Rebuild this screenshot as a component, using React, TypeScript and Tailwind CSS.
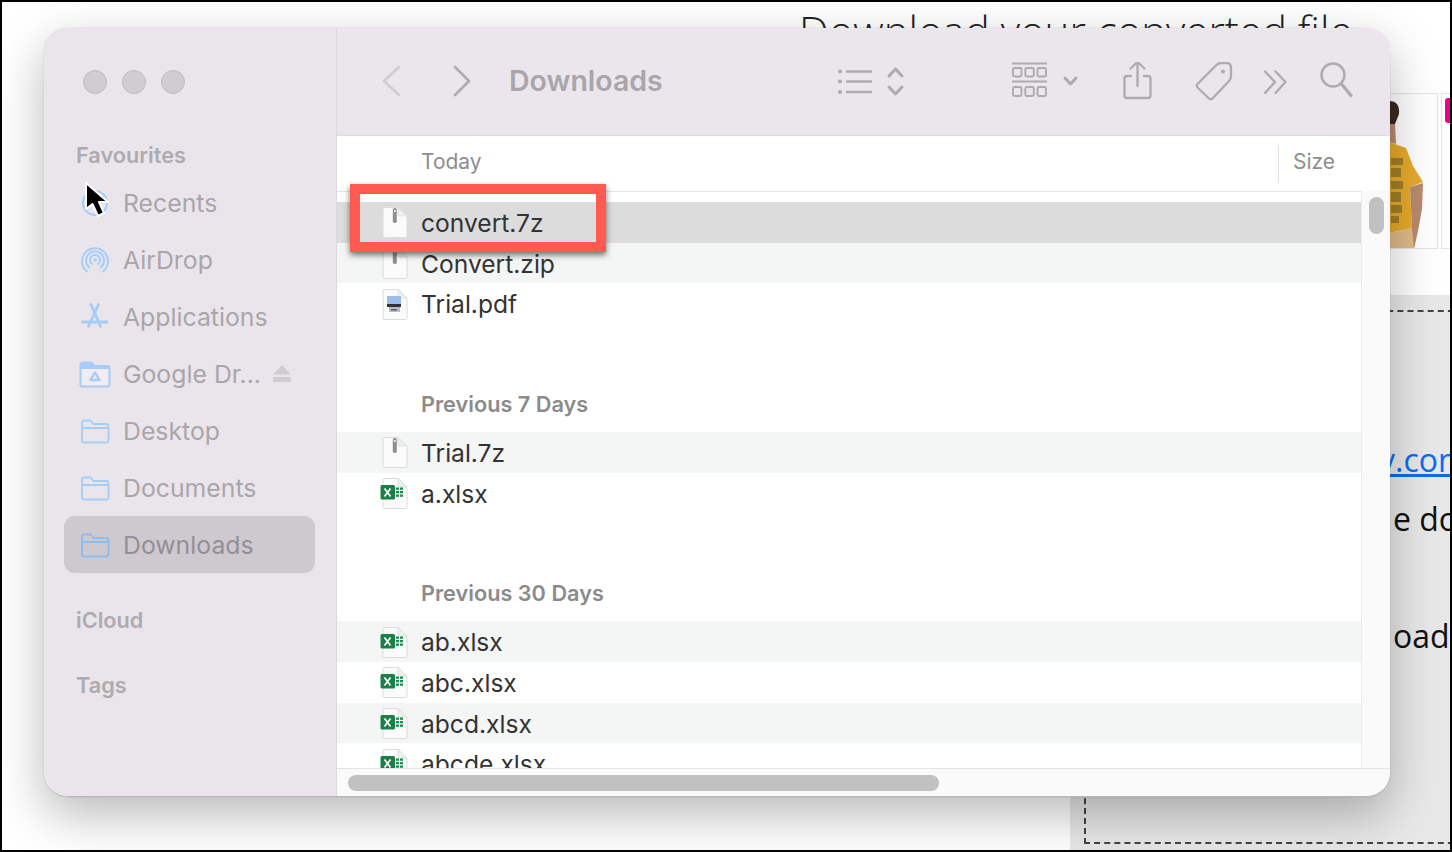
import React from "react";

const FONT = "font-['Inter','Liberation_Sans',sans-serif]";

function Svg({ w, h = 40, children }: { w: number; h?: number; children: React.ReactNode }) {
  return (
    <svg width={w} height={h} viewBox={`0 0 ${w} ${h}`} fill="none" className="shrink-0 block">
      {children}
    </svg>
  );
}

const BLUE = "#a6cdf8";

function FolderIcon({ color = BLUE }: { color?: string }) {
  return (
    <Svg w={32} h={28}>
      <path d="M3 7.500V5.500a2 2 0 0 1 2-2h6.500l3 3.500H27a2.500 2.500 0 0 1 2.500 2.500V23a2.500 2.500 0 0 1-2.500 2.500H5.500A2.500 2.500 0 0 1 3 23Z M3 11H29.500" stroke={color} strokeWidth="1.900" strokeLinejoin="round" />
    </Svg>
  );
}

function RecentsIcon() {
  return (
    <Svg w={32} h={28}>
      <circle cx="16" cy="14" r="12" stroke={BLUE} strokeWidth="2" />
      <path d="M16 7v7l5 3" stroke={BLUE} strokeWidth="2" />
    </Svg>
  );
}

function AirDropIcon() {
  return (
    <Svg w={32} h={30}>
      <g stroke={BLUE} strokeWidth="1.900" strokeLinecap="round">
        <path d="M8 26.500A13 13 0 1 1 24 26.500" />
        <path d="M10.500 22.500A9 9 0 1 1 21.500 22.500" />
        <path d="M12.800 18.800A5 5 0 1 1 19.200 18.800" />
      </g>
      <circle cx="16" cy="15" r="1.800" fill={BLUE} />
    </Svg>
  );
}

function AppsIcon() {
  return (
    <Svg w={32} h={30}>
      <g stroke={BLUE} strokeWidth="2.800" strokeLinecap="round">
        <path d="M12 2.500 L21.500 24.500" />
        <path d="M19.500 2.500 L9.500 24.500" />
        <path d="M3.500 20 H28" />
      </g>
    </Svg>
  );
}

function DriveFolderIcon() {
  return (
    <Svg w={32} h={28}>
      <path d="M1.500 5a2.500 2.500 0 0 1 2.500-2.500h8.500l3 3.500H28.500a2 2 0 0 1 2 2V24.500a2 2 0 0 1-2 2H3.500a2 2 0 0 1-2-2Z" fill="#f0ecf1" stroke={BLUE} strokeWidth="2" strokeLinejoin="round" />
      <path d="M1.500 5a2.500 2.500 0 0 1 2.500-2.500h8.500l3 3.500H30V9H1.500Z" fill={BLUE} />
      <path d="M16 12.500 L20.500 20H11.500Z" stroke={BLUE} strokeWidth="2.400" strokeLinejoin="round" />
    </Svg>
  );
}

function Eject() {
  return (
    <Svg w={20} h={20}>
      <path d="M10 1 L19 10.500 H1 Z" fill="#cfcbd0" />
      <rect x="1" y="13" width="18" height="5" rx="1" fill="#cfcbd0" />
    </Svg>
  );
}

function SideItem({ icon, label, selected, extra }: { icon: React.ReactNode; label: string; selected?: boolean; extra?: React.ReactNode }) {
  return (
    <div className={`h-[57px] w-[251px] ml-[20px] rounded-[11px] flex items-center pl-[15px] pt-[1px] ${selected ? "bg-[#cec9cf]" : ""}`}>
      <div className="w-[32px] flex justify-center shrink-0">{icon}</div>
      <span className={`ml-[12px] text-[24.800px] leading-none whitespace-nowrap ${selected ? "text-[#939095]" : "text-[#a9a6aa]"}`}>{label}</span>
      {extra}
    </div>
  );
}

function SectionLabel({ children, className = "" }: { children: React.ReactNode; className?: string }) {
  return <div className={`ml-[32px] text-[21.700px] leading-none font-semibold text-[#aeabaf] ${className}`}>{children}</div>;
}

function DocBase({ children }: { children?: React.ReactNode }) {
  return (
    <svg width="32" height="34" viewBox="0 0 32 34" fill="none" className="block shrink-0">
      <path d="M6.500 2.500H20L29 11V31a1.500 1.500 0 0 1-1.500 1.500H6.500A1.500 1.500 0 0 1 5 31V4a1.500 1.500 0 0 1 1.500-1.500Z" fill="#fbfbfb" stroke="#dcdcdc" strokeWidth="1" />
      <path d="M20 2.500V9.500a1.500 1.500 0 0 0 1.500 1.500H29Z" fill="#efefef" stroke="#dcdcdc" strokeWidth="0.800" />
      {children}
    </svg>
  );
}

function ZipIcon() {
  return (
    <DocBase>
      <rect x="14.800" y="3" width="4" height="15" rx="1.800" fill="#8f8f8f" />
      <rect x="15.800" y="5" width="2" height="2" fill="#e4e4e4" />
    </DocBase>
  );
}

function XlsIcon() {
  return (
    <DocBase>
      <rect x="2.500" y="9" width="14.500" height="14.500" rx="1.500" fill="#1a8048" />
      <path d="M6.500 12.500 L12.500 20.500 M12.500 12.500 L6.500 20.500" stroke="#fff" strokeWidth="1.700" />
      <g fill="#1f8a50">
        <rect x="18" y="11.500" width="3" height="2.300" /><rect x="22" y="11.500" width="3" height="2.300" />
        <rect x="18" y="15" width="3" height="2.300" /><rect x="22" y="15" width="3" height="2.300" />
        <rect x="18" y="18.500" width="3" height="2.300" /><rect x="22" y="18.500" width="3" height="2.300" />
      </g>
    </DocBase>
  );
}

function PdfIcon() {
  return (
    <DocBase>
      <rect x="9" y="9" width="14" height="8" fill="#9dbbe8" />
      <rect x="9" y="17" width="14" height="3" fill="#30333c" />
      <rect x="11" y="20" width="11" height="5" fill="#b9bcc4" />
      <rect x="13" y="22" width="6" height="1.500" fill="#5a5d66" />
    </DocBase>
  );
}

function Row({ name, icon, bg = "" }: { name: string; icon: React.ReactNode; bg?: string }) {
  return (
    <div className={`h-[40.670px] shrink-0 flex items-center pl-[41px] ${bg}`}>
      <div className="w-[43px] shrink-0">{icon}</div>
      <span className="pt-[2px] text-[24.600px] leading-none text-[#333] whitespace-nowrap">{name}</span>
    </div>
  );
}

function GroupHeader({ children }: { children: React.ReactNode }) {
  return (
    <div className="h-[108px] shrink-0 flex items-end pl-[84px] pb-[13px]">
      <span className="h-[28px] flex items-center text-[21.700px] leading-none font-semibold text-[#8b8b8b] whitespace-nowrap">{children}</span>
    </div>
  );
}

const TOOL = "#aeabb0";

function Toolbar() {
  return (
    <div className="h-[108px] shrink-0 flex items-center bg-[#eae6ec] border-b border-[#dedade]">
      <div className="ml-[43px]">
        <Svg w={24}>
          <path d="M19 5 L4 19 L19 33" stroke="#d0ccd1" strokeWidth="2.600" strokeLinecap="round" strokeLinejoin="round" />
        </Svg>
      </div>
      <div className="ml-[46px]">
        <Svg w={24}>
          <path d="M5 5 L19 19 L5 33" stroke={TOOL} strokeWidth="2.600" strokeLinecap="round" strokeLinejoin="round" />
        </Svg>
      </div>
      <div className="ml-[35px] mb-[1px] w-[153px] text-[28.500px] leading-none font-semibold text-[#a9a6ab] whitespace-nowrap">Downloads</div>
      <div className="ml-[174px]">
        <Svg w={70}>
          <g fill={TOOL}>
            <circle cx="4" cy="9.500" r="2" /><circle cx="4" cy="19.500" r="2" /><circle cx="4" cy="30" r="2" />
          </g>
          <path d="M11 9.500H35 M11 19.500H35 M11 30H35" stroke={TOOL} strokeWidth="2.400" strokeLinecap="round" />
          <path d="M53 14 L59.500 7 L66 14 M53 25 L59.500 32 L66 25" stroke={TOOL} strokeWidth="3" strokeLinecap="round" strokeLinejoin="round" />
        </Svg>
      </div>
      <div className="ml-[104px]">
        <Svg w={72}>
          <path d="M2 1.500H37 M2 19.500H37" stroke={TOOL} strokeWidth="2.200" />
          <g stroke={TOOL} strokeWidth="1.900" fill="none">
            <rect x="3" y="6" width="8.500" height="8.500" rx="1.500" /><rect x="15.300" y="6" width="8.500" height="8.500" rx="1.500" /><rect x="27.500" y="6" width="8.500" height="8.500" rx="1.500" />
            <rect x="3" y="25" width="8.500" height="9" rx="1.500" /><rect x="15.300" y="25" width="8.500" height="9" rx="1.500" /><rect x="27.500" y="25" width="8.500" height="9" rx="1.500" />
          </g>
          <path d="M55 16 L60.500 22 L66 16" stroke={TOOL} strokeWidth="3" strokeLinecap="round" strokeLinejoin="round" />
        </Svg>
      </div>
      <div className="ml-[38px]">
        <Svg w={34}>
          <path d="M11 14H7a2.500 2.500 0 0 0-2.500 2.500V33.500A2.500 2.500 0 0 0 7 36H28a2.500 2.500 0 0 0 2.500-2.500V16.500A2.500 2.500 0 0 0 28 14H24" stroke={TOOL} strokeWidth="2.300" strokeLinecap="round" />
          <path d="M17.500 24V0 M10.500 6.500 L17.500 0 L24.500 6.500" stroke={TOOL} strokeWidth="2.300" strokeLinecap="round" strokeLinejoin="round" />
        </Svg>
      </div>
      <div className="ml-[40px]">
        <Svg w={40}>
          <path d="M3.500 22 L23 2.500 Q25 1 28 1 H33 Q37 1 37 6 V14 Q37 17 35 19 L18.500 36.500 Q16.500 38 14.500 36 L3.500 25.500 Q2 23.500 3.500 22 Z" stroke={TOOL} strokeWidth="2.300" strokeLinejoin="round" />
          <circle cx="29" cy="9.500" r="2" fill={TOOL} />
        </Svg>
      </div>
      <div className="ml-[28px]">
        <Svg w={28}>
          <path d="M3 9.500 L13 20 L3 31 M13.500 9.500 L23.500 20 L13.500 31" stroke={TOOL} strokeWidth="2.300" strokeLinecap="round" strokeLinejoin="round" />
        </Svg>
      </div>
      <div className="ml-[28px]">
        <Svg w={36}>
          <circle cx="15" cy="13" r="11.500" stroke={TOOL} strokeWidth="2.500" />
          <path d="M23.500 22 L33 33.500" stroke={TOOL} strokeWidth="3.400" strokeLinecap="round" />
        </Svg>
      </div>
    </div>
  );
}

function FileList() {
  return (
    <div className="h-[577px] w-[1024px] bg-white border-t border-[#e3e3e3] flex flex-col overflow-hidden pt-[10px]">
      <Row name="convert.7z" icon={<ZipIcon />} bg="bg-[#dcdcdc]" />
      <Row name="Convert.zip" icon={<ZipIcon />} bg="bg-[#f4f5f5]" />
      <Row name="Trial.pdf" icon={<PdfIcon />} />
      <GroupHeader>Previous 7 Days</GroupHeader>
      <Row name="Trial.7z" icon={<ZipIcon />} bg="bg-[#f4f5f5]" />
      <Row name="a.xlsx" icon={<XlsIcon />} />
      <GroupHeader>Previous 30 Days</GroupHeader>
      <Row name="ab.xlsx" icon={<XlsIcon />} bg="bg-[#f4f5f5]" />
      <Row name="abc.xlsx" icon={<XlsIcon />} />
      <Row name="abcd.xlsx" icon={<XlsIcon />} bg="bg-[#f4f5f5]" />
      <Row name="abcde.xlsx" icon={<XlsIcon />} />
    </div>
  );
}

function FinderWindow() {
  return (
    <div className={`absolute left-[44px] top-[28px] w-[1346px] h-[769px] rounded-[24px] overflow-hidden flex ${FONT} border-b border-[#b9b6ba]`}>
      <aside className="w-[293px] shrink-0 bg-[#e9e5eb] border-r border-[#dcd8dd] flex flex-col">
        <div className="flex gap-[15px] ml-[39px] mt-[41.500px]">
          <div className="size-[24px] rounded-full bg-[#d0ccd1] border border-[#bfbbc0]" />
          <div className="size-[24px] rounded-full bg-[#d0ccd1] border border-[#bfbbc0]" />
          <div className="size-[24px] rounded-full bg-[#d0ccd1] border border-[#bfbbc0]" />
        </div>
        <SectionLabel className="mt-[51px]">Favourites</SectionLabel>
        <div className="mt-[8px] flex flex-col">
          <SideItem icon={<RecentsIcon />} label="Recents" />
          <SideItem icon={<AirDropIcon />} label="AirDrop" />
          <SideItem icon={<AppsIcon />} label="Applications" />
          <SideItem
            icon={<DriveFolderIcon />}
            label="Google Dr..."
            extra={<div className="ml-[11px]"><Eject /></div>}
          />
          <SideItem icon={<FolderIcon />} label="Desktop" />
          <SideItem icon={<FolderIcon />} label="Documents" />
          <SideItem icon={<FolderIcon color="#8fbcee" />} label="Downloads" selected />
        </div>
        <SectionLabel className="mt-[37px]">iCloud</SectionLabel>
        <SectionLabel className="mt-[43px]">Tags</SectionLabel>
      </aside>
      <main className="flex-1 flex flex-col bg-[#fafafa] min-w-0">
        <Toolbar />
        <div className="h-[55px] shrink-0 bg-white flex items-center">
          <span className="ml-[84px] mb-[4px] text-[21px] leading-none text-[#8e8e8e]">Today</span>
          <div className="ml-auto w-[112px] h-[38px] border-l border-[#e2e2e2] flex items-center pl-[14px] pb-[4px]">
            <span className="text-[21px] leading-none text-[#8e8e8e]">Size</span>
          </div>
        </div>
        <div className="flex">
          <FileList />
          <div className="w-[29px] border-l border-[#ececec] pt-[6px] flex justify-center">
            <div className="w-[15px] h-[37px] rounded-full bg-[#c1c1c1]" />
          </div>
        </div>
        <div className="flex-1 border-t border-[#e3e3e3] pl-[11px] pt-[6px]">
          <div className="w-[591px] h-[16px] rounded-full bg-[#c1c1c1]" />
        </div>
      </main>
    </div>
  );
}

function Backdrop() {
  const page = "font-['Open_Sans',sans-serif] whitespace-nowrap leading-none absolute";
  return (
    <>
      <div className={`${page} left-[799px] top-[10px] text-[42px] font-light text-[#222]`}>Download your converted file</div>
      <div className="absolute left-[1300px] top-[93px] w-[138px] h-[156px] border border-[#e4e4e4] overflow-hidden">
        <svg width="138" height="156" viewBox="0 0 138 156" className="block">
          <path d="M88 7 Q99 7 98 20 L94 30 L88 30Z" fill="#3a2a22" />
          <path d="M88 30 L94 30 L95 50 L88 48Z" fill="#b98a6e" />
          <path d="M88 48 L105 54 L112 72 L122 88 L109 93 L111 134 L88 139 Z" fill="#e7aa2c" />
          <g fill="#8a7226" opacity="0.75">
            <rect x="90" y="64" width="12" height="7" />
            <rect x="90" y="74" width="10" height="9" />
            <rect x="90" y="87" width="12" height="8" />
            <rect x="90" y="98" width="10" height="10" />
            <rect x="90" y="111" width="11" height="8" />
            <rect x="90" y="122" width="8" height="7" />
          </g>
          <path d="M109 93 L122 89 L121 115 L117 137 L113 155 L108 155 L111 134 Z" fill="#b98a6e" />
          <path d="M88 139 L111 134 L113 155 L88 155 Z" fill="#e0bb88" />
        </svg>
      </div>
      <div className="absolute left-[1441px] top-[93px] w-[30px] h-[156px] border border-[#e4e4e4]">
        <div className="ml-[3px] mt-[4px] w-[10px] h-[25px] rounded-[3px] bg-[#ec008c]" />
      </div>
      <div className="absolute left-[1070px] top-[295px] w-[382px] h-[557px] bg-[#e8e8e8]" />
      <div className="absolute left-[1084px] top-[310px] w-[380px] h-[534px] border-2 border-dashed border-[#444]" />
      <div className={`${page} left-[1379px] top-[444px] text-[32px] text-[#0a6cf5] underline`}>v.com</div>
      <div className={`${page} left-[1393px] top-[503px] text-[32px] text-[#111]`}>e do</div>
      <div className={`${page} left-[1393px] top-[620px] text-[32px] text-[#111]`}>oad</div>
    </>
  );
}

function Cursor() {
  return (
    <svg width="30" height="40" viewBox="0 0 30 40" className="absolute left-[83px] top-[181px]">
      <path d="M3 2 L3 28 L9.500 23 L15 35 L21 32 L16 21 L25 21 Z" fill="#000" stroke="#fff" strokeWidth="2" strokeLinejoin="round" />
    </svg>
  );
}

export default function App() {
  return (
    <div className="relative w-[1452px] h-[852px] overflow-hidden bg-white">
      <Backdrop />
      <div className="absolute left-[44px] top-[28px] w-[1346px] h-[769px] rounded-[24px] shadow-[0_18px_50px_rgba(0,0,0,0.28),0_0_1px_rgba(0,0,0,0.35)]" />
      <FinderWindow />
      <div className="absolute left-[350px] top-[184px] w-[256px] h-[68px] border-[10px] border-[#ff5a4f] shadow-[0_3px_6px_rgba(0,0,0,0.55)]" />
      <Cursor />
      <div className="absolute inset-0 border-2 border-black pointer-events-none" />
    </div>
  );
}
